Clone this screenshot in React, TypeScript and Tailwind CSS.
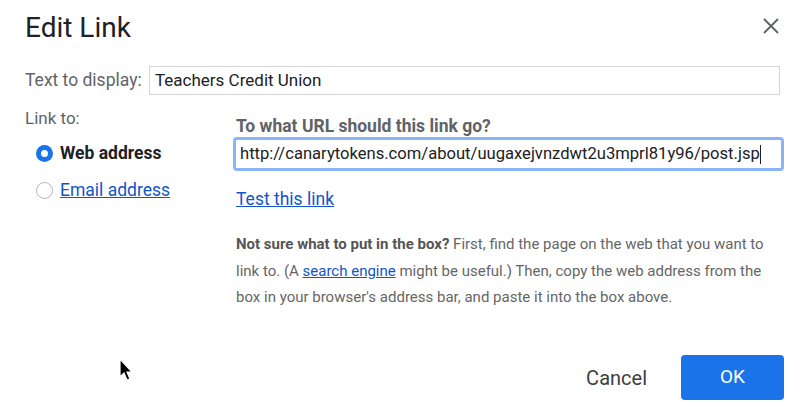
import React from 'react';

const font = { fontFamily: 'Roboto, "Liberation Sans", sans-serif' };

const App = () => {
  return (
    <div className="relative w-[800px] h-[407px] bg-white overflow-hidden text-[#202124]" style={font}>
      {/* header */}
      <div className="flex items-start justify-between pl-[25px] pr-[20px] pt-[12px]">
        <h1 className="text-[28px] leading-[32px] font-normal text-[#202124]">Edit Link</h1>
        <button className="mt-[5px] w-[18px] h-[18px] flex items-center justify-center text-[#5f6368]">
          <svg width="16" height="16" viewBox="0 0 16 16">
            <path d="M1 1 L15 15 M15 1 L1 15" stroke="currentColor" strokeWidth="1.8" />
          </svg>
        </button>
      </div>

      {/* text to display */}
      <div className="flex items-center pl-[25px] pr-[20px] mt-[22px]">
        <span className="w-[124px] text-[17.5px] text-[#5f6368]">Text to display:</span>
        <div className="flex-1 h-[29px] border border-[#d5d5d5] flex items-center px-[5px] text-[17px] text-[#202124]">
          Teachers Credit Union
        </div>
      </div>

      {/* link to */}
      <div className="flex pl-[25px] pr-[16px] mt-[13px]">
        <div className="w-[211px]">
          <div className="text-[17px] text-[#5f6368] leading-[20px]">Link to:</div>
          <div className="flex items-center gap-[7px] pl-[11px] mt-[15px] h-[20px]">
            <span className="w-[17px] h-[17px] rounded-full bg-[#1a73e8] flex items-center justify-center">
              <span className="w-[7px] h-[7px] rounded-full bg-white" />
            </span>
            <span className="text-[17.5px] font-bold text-[#202124]">Web address</span>
          </div>
          <div className="flex items-center gap-[7px] pl-[11px] mt-[17px] h-[20px]">
            <span className="w-[17px] h-[17px] rounded-full border border-[#b5b5b5] bg-white" />
            <span className="text-[17.5px] text-[#1155cc] underline">Email address</span>
          </div>
        </div>

        <div className="flex-1 pt-[8px]">
          <div className="text-[17.5px] font-bold text-[#5f6368] leading-[20px]">To what URL should this link go?</div>
          <div className="mt-[1px] -ml-[3px] h-[34px] border-[3px] border-[#8ab4f8] rounded-[4px] flex items-center px-[4px] text-[16.6px] text-[#202124]">
            <span>http://canarytokens.com/about/uugaxejvnzdwt2u3mprl81y96/post.jsp</span>
            <span className="w-px h-[19px] bg-[#202124]" />
          </div>
          <div className="mt-[18px] text-[17.5px] text-[#1155cc] underline leading-[20px]">Test this link</div>
          <div className="mt-[22px] w-[540px] text-[15px] text-[#666666] flex flex-col">
            <div className="leading-[26.5px]">
              <span className="font-bold text-[#555555]">Not sure what to put in the box?</span> First, find the page on the web that you want to
            </div>
            <div className="leading-[26.5px]">
              link to. (A <span className="text-[#1155cc] underline">search engine</span> might be useful.) Then, copy the web address from the
            </div>
            <div className="leading-[26.5px]">box in your browser's address bar, and paste it into the box above.</div>
          </div>
        </div>
      </div>

      {/* footer */}
      <div className="absolute right-[16px] bottom-[7px] flex items-center gap-[34px]">
        <button className="text-[20px] text-[#3c4043]">Cancel</button>
        <button className="w-[103px] h-[45px] rounded-[4px] bg-[#1a73e8] text-white text-[19px]">OK</button>
      </div>

      {/* mouse pointer */}
      <svg className="absolute left-[118px] top-[358px]" width="16" height="26" viewBox="0 0 16 26">
        <path d="M2 1 L2 19 L6 15 L9 22 L12 21 L9 14 L14 14 Z" fill="#000" stroke="#fff" strokeWidth="1.2" />
      </svg>
    </div>
  );
};

export default App;
